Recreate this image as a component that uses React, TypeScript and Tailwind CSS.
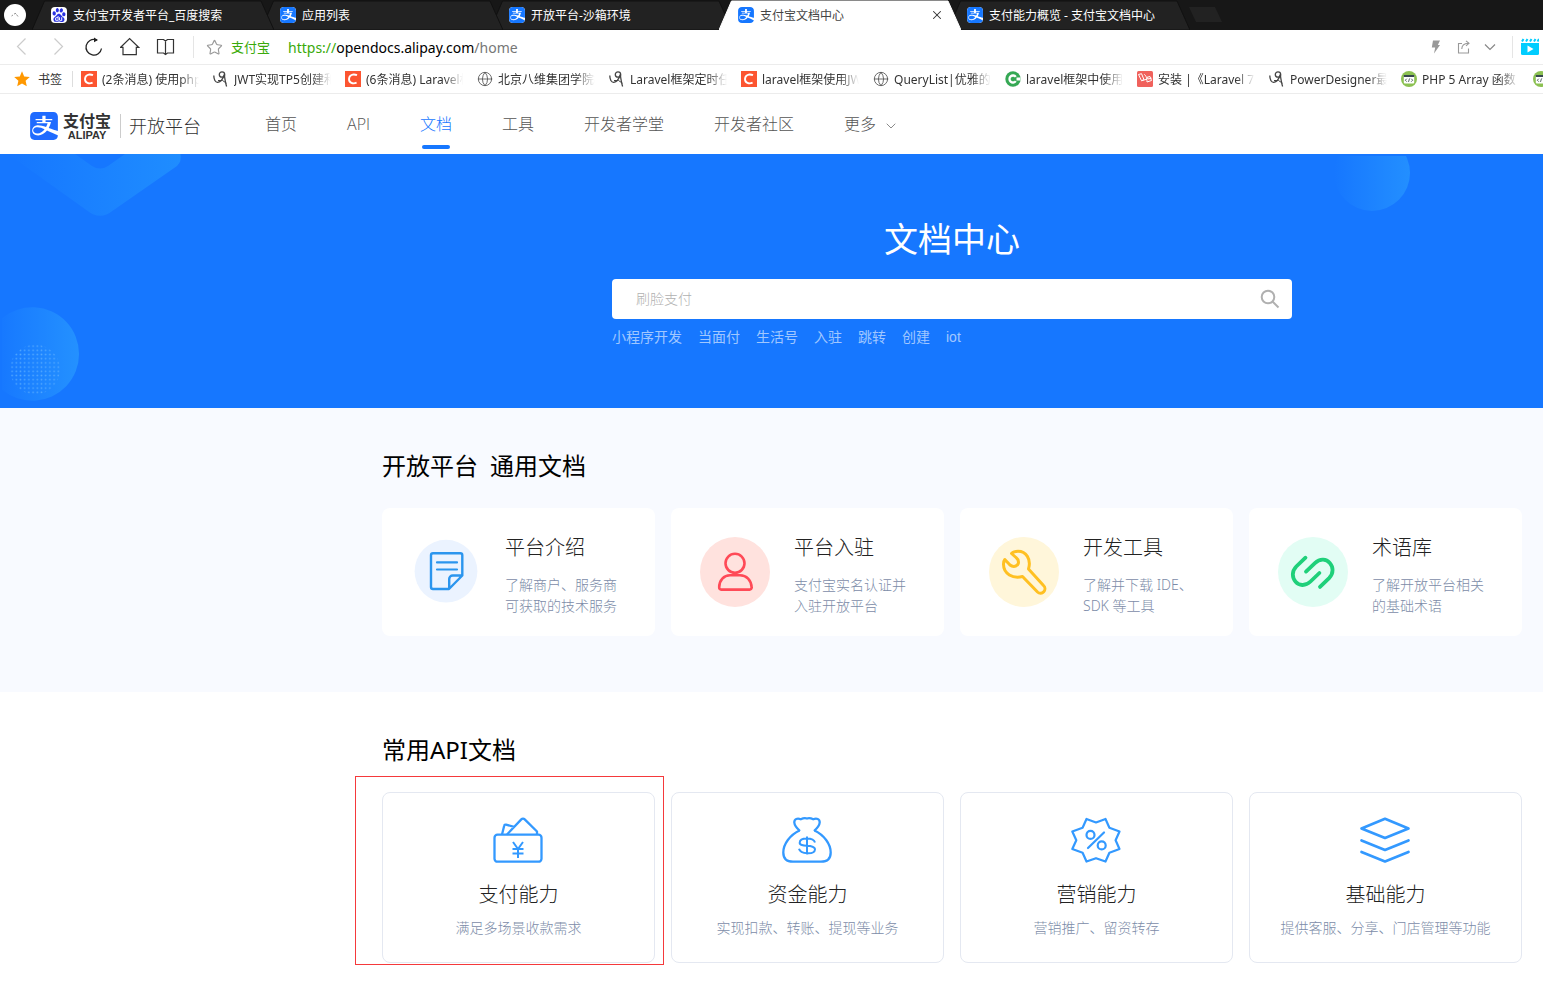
import React from 'react';
import { ChevronDown, Globe, Star, X } from 'lucide-react';
import { SiAlipay, SiBaidu } from 'react-icons/si';

type BookmarkKind = 'csdn' | 'figure' | 'globe' | 'green' | 'laravel' | 'code';

interface Tab {
  title: string;
  icon: 'baidu' | 'alipay';
  active?: boolean;
  layer: string;
}

const tabs: Tab[] = [
  { title: '支付宝开发者平台_百度搜索', icon: 'baidu', layer: 'z-40' },
  { title: '应用列表', icon: 'alipay', layer: 'z-30' },
  { title: '开放平台-沙箱环境', icon: 'alipay', layer: 'z-20' },
  { title: '支付宝文档中心', icon: 'alipay', active: true, layer: 'z-50' },
  { title: '支付能力概览 - 支付宝文档中心', icon: 'alipay', layer: 'z-10' },
];

const bookmarks: { kind: BookmarkKind; title: string }[] = [
  { kind: 'csdn', title: '(2条消息) 使用php' },
  { kind: 'figure', title: 'JWT实现TP5创建和' },
  { kind: 'csdn', title: '(6条消息) Laravel框' },
  { kind: 'globe', title: '北京八维集团学院教' },
  { kind: 'figure', title: 'Laravel框架定时任' },
  { kind: 'csdn', title: 'laravel框架使用JW' },
  { kind: 'globe', title: 'QueryList|优雅的渐' },
  { kind: 'green', title: 'laravel框架中使用' },
  { kind: 'laravel', title: '安装 |《Laravel 7' },
  { kind: 'figure', title: 'PowerDesigner最' },
  { kind: 'code', title: 'PHP 5 Array 函数' },
  { kind: 'code', title: 'PHP' },
];

const navItems = ['首页', 'API', '文档', '工具', '开发者学堂', '开发者社区'];

const hotWords = ['小程序开发', '当面付', '生活号', '入驻', '跳转', '创建', 'iot'];

const AlipayIcon: React.FC = () => (
  <span className="block w-4 h-4 rounded-sm bg-white overflow-hidden shrink-0">
    <SiAlipay size={16} className="text-[#1677ff]" />
  </span>
);

const BookmarkIcon: React.FC<{ kind: BookmarkKind }> = ({ kind }) => {
  switch (kind) {
    case 'csdn':
      return (
        <svg width="16" height="16" viewBox="0 0 16 16" className="shrink-0">
          <rect width="16" height="16" fill="#fc5531" />
          <path d="M12 4.200C8 2.600 4.200 4 4 8c-.1 4 4 5.200 7.600 3.700" fill="none" stroke="#fff" strokeWidth="1.900" />
        </svg>
      );
    case 'figure':
      return (
        <svg width="16" height="16" viewBox="0 0 16 16" className="shrink-0" fill="none" stroke="#444" strokeWidth="1.300">
          <circle cx="9" cy="3.500" r="2.700" />
          <path d="M.8 4.500c0 4 1.500 7 4 6.800 3-.3 5-2.800 6.500-7.800 .5 4 1 8 2.300 12" />
          <path d="M5 9.500l4.500 0 4 2.700" strokeWidth="1" />
        </svg>
      );
    case 'globe':
      return <Globe size={16} strokeWidth={1.3} className="shrink-0 text-[#555]" />;
    case 'green':
      return (
        <svg width="16" height="16" viewBox="0 0 16 16" className="shrink-0">
          <circle cx="8" cy="8" r="7.700" fill="#35a854" />
          <path d="M10.800 5.900a3.500 3.500 0 1 0 0 4.200" fill="none" stroke="#fff" strokeWidth="2.300" />
          <path d="M11.500 6.500h4v3h-4z" fill="#fff" />
        </svg>
      );
    case 'laravel':
      return (
        <svg width="16" height="16" viewBox="0 0 16 16" className="shrink-0">
          <rect width="16" height="16" rx="1.500" fill="#f0615c" />
          <path
            d="M1.500 3.500l3-.8 2.500 6-2.500 1zM4.500 9.700l5.500-1.500M7 3.500c1.500 0 3 3 3 7.500l4.500-1.500-1.500-4-3 .8 1 1.700 3.500-.8"
            fill="none"
            stroke="#fff"
          />
        </svg>
      );
    case 'code':
      return (
        <svg width="16" height="16" viewBox="0 0 16 16" className="shrink-0">
          <circle cx="8" cy="8" r="8" fill="#8cc152" />
          <rect x="2.800" y="4" width="10.400" height="8.500" rx="1" fill="#fff" />
          <rect x="2.800" y="4" width="10.400" height="2" fill="#37474f" />
          <path d="M5.800 7.700L4.300 9.200l1.500 1.500M10.200 7.700l1.500 1.500-1.500 1.500M8.500 7.500l-1 3.400" fill="none" stroke="#455" strokeWidth=".9" />
        </svg>
      );
  }
};

const TabStrip: React.FC = () => (
  <div className="flex h-[30px] bg-[#171717] overflow-hidden">
    <div className="flex items-center w-8 shrink-0 pl-1">
      <span className="flex items-center justify-center w-[22px] h-[22px] rounded-full bg-white">
        <svg width="8" height="6" viewBox="0 0 8 6" fill="none" stroke="#777" strokeWidth=".8">
          <path d="M.5 4l1.500-1M3 2l2-.7M5.500 2.500l1.500 2" />
        </svg>
      </span>
    </div>
    {tabs.map((tab) => (
      <div key={tab.title} className={`relative flex items-center h-[30px] w-[242px] min-w-0 -mr-[13px] pl-[19px] pr-[17px] ${tab.layer}`}>
        <svg className="absolute inset-0 w-full h-full" viewBox="0 0 242 30" preserveAspectRatio="none">
          <path d="M0 30L12.500 1H229L242 30z" fill={tab.active ? '#fff' : '#222'} stroke={tab.active ? '#fff' : '#111'} />
        </svg>
        <button className={`relative flex flex-1 min-w-0 items-center gap-[6px] text-xs ${tab.active ? 'text-[#444]' : 'text-white'}`}>
          {tab.icon === 'baidu' ? (
            <span className="flex items-center justify-center w-4 h-4 rounded-sm bg-white shrink-0">
              <SiBaidu size={14} className="text-[#2932e1]" />
            </span>
          ) : (
            <AlipayIcon />
          )}
          <span className="truncate pt-px">{tab.title}</span>
        </button>
        {tab.active && (
          <button aria-label="关闭" className="relative text-[#333]">
            <X size={14} strokeWidth={1.8} />
          </button>
        )}
      </div>
    ))}
    <svg width="34" height="16" viewBox="0 0 34 16" className="ml-3 mt-[7px] shrink-0">
      <path d="M0 0h26l7 15H7z" fill="#222" />
    </svg>
  </div>
);

const AddressBar: React.FC = () => (
  <div className="flex items-center h-[35px] border-b border-[#ececec] pl-3 text-[#333]">
    <button aria-label="后退" className="w-9">
      <svg width="20" height="20" viewBox="0 0 20 20" fill="none" stroke="#ccc" strokeWidth="1.200">
        <path d="M13.500 1.500L5.500 9.500l8 8" />
      </svg>
    </button>
    <button aria-label="前进" className="w-9">
      <svg width="20" height="20" viewBox="0 0 20 20" fill="none" stroke="#ccc" strokeWidth="1.200">
        <path d="M6.500 1.500l8 8-8 8" />
      </svg>
    </button>
    <button aria-label="刷新" className="w-9">
      <svg width="20" height="20" viewBox="0 0 20 20" fill="none" stroke="#222" strokeWidth="1.300">
        <path d="M12 2.800A7.800 7.800 0 1 0 17.500 11.500M10 2.800h3" />
        <path d="M10 .6L14 2.900 10 5.200z" fill="#222" stroke="none" />
      </svg>
    </button>
    <button aria-label="主页" className="w-9">
      <svg width="20" height="20" viewBox="0 0 20 20" fill="none" stroke="#333" strokeWidth="1.200">
        <path d="M.7 10.300L9.600 1.500l9 8.800h-2.300v7.300H3v-7.300z" />
      </svg>
    </button>
    <button aria-label="阅读" className="w-9">
      <svg width="20" height="20" viewBox="0 0 20 20" fill="none" stroke="#333" strokeWidth="1.200">
        <path d="M1.500 2.500h6l2 1.500 2-1.500h6v13.500h-6l-2 1.500-2-1.500h-6zM9.500 4v13" />
      </svg>
    </button>
    <span className="w-px h-[22px] ml-[1px] bg-[#e5e5e5]" />
    <button aria-label="收藏" className="ml-3 text-[#999]">
      <Star size={17} strokeWidth={1.6} />
    </button>
    <span className="ml-2 pt-px text-[13px] text-[#3aaa0a]">支付宝</span>
    <span className="ml-[18px] pt-px flex-1 text-sm text-black">
      <span className="text-[#3aaa0a]">https://</span>opendocs.alipay.com<span className="text-[#777]">/home</span>
    </span>
    <button aria-label="极速模式">
      <svg width="10" height="14" viewBox="0 0 10 14">
        <path d="M2 .5h7L6.800 5H9L3 13.500 4.200 7.500H.8z" fill="#999" />
      </svg>
    </button>
    <button aria-label="分享" className="ml-4">
      <svg width="14" height="14" viewBox="0 0 14 14" fill="none" stroke="#999" strokeWidth="1.100">
        <path d="M5 3.500H1.500v9.500h10V8.500M4.800 9c0-3.500 2-5.500 6.500-5.700M9 .8l3 2.500-3 2.500" />
      </svg>
    </button>
    <button aria-label="更多选项" className="ml-3">
      <svg width="14" height="14" viewBox="0 0 14 14" fill="none" stroke="#888" strokeWidth="1.200">
        <path d="M2 4.500l5 5 5-5" />
      </svg>
    </button>
    <span className="w-px h-[22px] ml-[15px] bg-[#e5e5e5]" />
    <button aria-label="视频" className="ml-2 mr-1">
      <svg width="18" height="18" viewBox="0 0 18 18">
        <path d="M0 5h18v10.500a1.500 1.500 0 0 1-1.500 1.500h-15A1.500 1.500 0 0 1 0 15.500z" fill="#00cdff" />
        <path d="M1 3.500L2.500 1M5 3.500L6.500 1M9 3.500L10.500 1M13 3.500L14.500 1M16.500 3.500L18 1" stroke="#00cdff" strokeWidth="2" />
        <path d="M6.500 7.500l6 3.500-6 3.500z" fill="#fff" />
      </svg>
    </button>
  </div>
);

const BookmarksBar: React.FC = () => (
  <div className="flex items-center h-[29px] border-b border-[#ececec] pl-[14px] overflow-hidden text-xs text-[#333]">
    <svg width="16" height="16" viewBox="0 0 16 16" className="shrink-0">
      <path d="M8 .3l2.200 5.200 5.600.5-4.200 3.700 1.200 5.600L8 12.400l-4.800 2.900 1.200-5.600L.2 6l5.600-.5z" fill="#ff9800" />
    </svg>
    <span className="ml-2 pt-px shrink-0">书签</span>
    <span className="w-px h-4 ml-[10px] mr-2 bg-[#ddd] shrink-0" />
    {bookmarks.map((item, idx) => (
      <a key={idx} href="#" className="flex items-center gap-[5px] w-[132px] shrink-0">
        <BookmarkIcon kind={item.kind} />
        <span className="w-[97px] pt-px overflow-hidden whitespace-nowrap [mask-image:linear-gradient(to_right,black_80%,transparent)]">
          {item.title}
        </span>
      </a>
    ))}
  </div>
);

const SiteHeader: React.FC = () => (
  <header className="flex items-center h-[60px] bg-white pl-[30px]">
    <a href="#" className="flex items-center mt-1">
      <SiAlipay size={28} className="text-[#1f6bff]" />
      <span className="flex flex-col items-center ml-[5px] text-[#333] font-bold">
        <span className="text-base leading-[18px]">支付宝</span>
        <span className="font-['Liberation_Sans',sans-serif] text-[11px] leading-[10px]">ALIPAY</span>
      </span>
      <span className="w-px h-6 ml-[9px] mr-2 bg-[#ccc]" />
      <span className="text-lg leading-6 text-[#333] font-light">开放平台</span>
    </a>
    <nav className="flex ml-16 gap-[50px] text-base text-[#555] font-light font-['Open_Sans','Noto_Sans_CJK_SC',sans-serif]">
      {navItems.map((item) => (
        <a key={item} href="#" className={`relative whitespace-nowrap ${item === '文档' ? 'text-[#1677ff]' : ''}`}>
          {item}
          {item === '文档' && <span className="absolute left-[2px] right-[2px] -bottom-[13px] h-1 rounded-sm bg-[#1677ff]" />}
        </a>
      ))}
      <button className="flex items-center gap-[7px] whitespace-nowrap">
        更多
        <ChevronDown size={16} strokeWidth={1.300} className="mt-1 text-[#777]" />
      </button>
    </nav>
  </header>
);

const HeroDecor: React.FC = () => (
  <>
    <svg className="absolute left-0 top-0" width="200" height="254" viewBox="0 0 200 254">
      <defs>
        <linearGradient id="band" x1="10" x2="182" y1="0" y2="0" gradientUnits="userSpaceOnUse">
          <stop offset="0" stopColor="#1677ff" />
          <stop offset="1" stopColor="#1f8dff" />
        </linearGradient>
        <linearGradient id="disc">
          <stop offset="0" stopColor="#1779ff" />
          <stop offset="1" stopColor="#2491ff" />
        </linearGradient>
        <pattern id="dots" width="4.200" height="4.200" patternUnits="userSpaceOnUse" x="10" y="190">
          <circle cx="2.100" cy="2.100" r=".85" fill="#52a8ff" />
        </pattern>
      </defs>
      <path d="M8 0L87 56.500q13 10.500 26 0L177 12q5-5 3.500-12H125L108 12q-8 5-16 0L75 0z" fill="url(#band)" />
      <path d="M2 164.500a46.700 46.700 0 1 1 0 71z" fill="url(#disc)" />
      <circle cx="35" cy="215.500" r="25" fill="url(#dots)" />
    </svg>
    <svg className="absolute right-[133px] top-[2px]" width="76" height="56" viewBox="0 0 76 56">
      <defs>
        <linearGradient id="disc2">
          <stop offset="0" stopColor="#1677ff" />
          <stop offset="1" stopColor="#238fff" />
        </linearGradient>
      </defs>
      <circle cx="38" cy="17" r="38" fill="url(#disc2)" />
    </svg>
  </>
);

const Hero: React.FC = () => (
  <section className="relative h-[254px] bg-[#1677ff] overflow-hidden">
    <HeroDecor />
    <div className="relative pl-[382px] pr-[21px] pt-[60px]">
      <div className="w-full max-w-[680px] mx-auto">
        <h1 className="text-[34px] leading-[50px] text-white text-center">文档中心</h1>
        <div className="flex items-center h-10 mt-[15px] pl-6 pr-3 bg-white rounded-sm">
          <input
            aria-label="搜索文档"
            placeholder="刷脸支付"
            className="flex-1 min-w-0 text-sm font-light placeholder:text-[#b0b0b0] focus:outline-none"
          />
          <button aria-label="搜索">
            <svg width="20" height="20" viewBox="0 0 20 20" fill="none" stroke="#b0b0b0" strokeWidth="2">
              <circle cx="8" cy="8" r="6.300" />
              <path d="M12.500 12.500l6 6" />
            </svg>
          </button>
        </div>
        <div className="flex gap-4 mt-2 text-sm text-white/60 font-['Liberation_Sans','Noto_Sans_CJK_SC',sans-serif]">
          {hotWords.map((word) => (
            <a key={word} href="#">{word}</a>
          ))}
        </div>
      </div>
    </div>
  </section>
);

const DocIcon = () => (
  <svg width="70" height="70" viewBox="0 0 70 70" fill="none" className="shrink-0">
    <circle cx="35" cy="34.200" r="31.400" fill="#ebf3ff" />
    <path
      d="M22 16.200h27.300a2 2 0 0 1 2 2V38.500L38 52H22a2 2 0 0 1-2-2V18.200a2 2 0 0 1 2-2zM38.200 51.500V42a3.500 3.500 0 0 1 3.500-3.500h9.300"
      stroke="#2b95ee"
      strokeWidth="2.400"
      strokeLinejoin="round"
    />
    <path d="M26 25.400h20M26 32.500h20" stroke="#2b95ee" strokeWidth="2.200" strokeLinecap="round" />
  </svg>
);

const PersonIcon = () => (
  <svg width="70" height="70" viewBox="0 0 70 70" fill="none" stroke="#ff4a57" strokeWidth="2.600" className="shrink-0">
    <circle cx="35" cy="35" r="35" fill="#ffe2de" stroke="none" />
    <circle cx="35" cy="26.300" r="9.500" />
    <path d="M19.200 50.300C19.200 43 24 38.300 30 38.300h10c6.500 0 11.300 4.700 11.600 12a2 2 0 0 1-2 2.300H21.200a2 2 0 0 1-2-2.300z" />
  </svg>
);

const WrenchIcon = () => (
  <svg width="70" height="70" viewBox="0 0 70 70" fill="none" className="shrink-0">
    <circle cx="35" cy="35" r="35" fill="#fff6da" />
    <path
      d="M22.500 16.500C24 15 26.500 14.300 29 14.300C37 14.300 42.500 22 39.500 32L54.500 48.500A4.300 4.300 0 0 1 48.500 55L33.500 39.500C24 42 14.300 37 14.500 27C14.500 25 15 23.500 15.800 22.500L21 28C24 30.500 28.500 29.500 29.300 26.500C30 23.500 29 22 27 20.500Z"
      stroke="#ffc022"
      strokeWidth="3"
      strokeLinejoin="round"
    />
  </svg>
);

const LinkIcon = () => (
  <svg width="70" height="70" viewBox="0 0 70 70" fill="none" className="shrink-0">
    <circle cx="35" cy="35" r="35" fill="#e2fdf4" />
    <path
      d="M27.500 20.700L18.300 29.500C8.500 39.500 21.500 55 32.500 44.500L41.400 36M42 49.900L51.100 41.100C60.900 31.100 47.900 15.600 36.900 26.100L28 34.600"
      stroke="#1fd07a"
      strokeWidth="3.800"
      strokeLinecap="round"
    />
  </svg>
);

const WalletIcon = () => (
  <svg width="54" height="49" viewBox="0 0 54 49" fill="none" stroke="#3399ff" strokeWidth="2.300" strokeLinejoin="round">
    <rect x="2.500" y="18.700" width="47" height="27" rx="3" />
    <path d="M15 18.500L29.300 3.400a2.400 2.400 0 0 1 3.400 0L45 15.500v3M10 18.500l2.200-8.700a1.500 1.500 0 0 1 1.800-1.200l8 2.200" />
    <path d="M21 26l5 7 5-7M26 33v9M20.500 33h11M20.500 37.500h11" strokeWidth="2" />
  </svg>
);

const BagIcon = () => (
  <svg width="54" height="49" viewBox="0 0 54 49" fill="none" stroke="#3399ff" strokeWidth="2.300" strokeLinejoin="round">
    <path d="M18.500 14.500C9 19 2.300 28 2.300 36.500C2.300 43 6 45.700 12 45.700H40C46 45.700 49.700 43 49.700 36.500C49.700 28 43 19 33.500 14.500" />
    <path d="M19 15C15.500 12 13.500 9.500 13.300 6.500C13.200 2.800 16.500 2 19.800 3.300C22.500 1.800 24.500 1.800 26 2.500C27.500 1.800 29.500 1.800 32.200 3.300C35.500 2 38.800 2.800 38.700 6.500C38.500 9.500 36.500 12 33 15" />
    <path d="M34 26.500C32.500 21.500 19 21 18.700 26.700C18.500 32 34 27.500 34 33.500C33.500 39 19.500 38.500 18 32.800M26 20.500v18" strokeWidth="2" />
  </svg>
);

const CouponIcon = () => (
  <svg width="54" height="49" viewBox="0 0 54 49" fill="none" stroke="#3399ff" strokeWidth="2.200">
    <path
      d="M16.500 3L26 6.500L35.500 3L39.400 11.700L49.500 15.500L45.600 24.300L49.500 33L39.400 36.700L35.500 45.500L26 42.200L16.500 45.500L12.600 36.700L2.300 33L6.300 24.300L2.300 15.500L12.600 11.700Z"
      strokeLinejoin="round"
    />
    <circle cx="20.500" cy="18.900" r="4" />
    <circle cx="31.700" cy="29.400" r="4" />
    <path d="M34 16.500L18 32" strokeLinecap="round" />
  </svg>
);

const LayersIcon = () => (
  <svg width="54" height="49" viewBox="0 0 54 49" fill="none" stroke="#3399ff" strokeWidth="2.700" strokeLinejoin="round" strokeLinecap="round">
    <path d="M26 2.800L49.500 12.400L26 22L2.500 12.400ZM2.500 24.400L26 34L49.500 24.400M2.500 36L26 45.500L49.500 36" />
  </svg>
);

const guides = [
  { title: '平台介绍', lines: ['了解商户、服务商', '可获取的技术服务'], icon: <DocIcon /> },
  { title: '平台入驻', lines: ['支付宝实名认证并', '入驻开放平台'], icon: <PersonIcon /> },
  { title: '开发工具', lines: ['了解并下载 IDE、', 'SDK 等工具'], icon: <WrenchIcon /> },
  { title: '术语库', lines: ['了解开放平台相关', '的基础术语'], icon: <LinkIcon /> },
];

const apis = [
  { title: '支付能力', desc: '满足多场景收款需求', icon: <WalletIcon />, marked: true },
  { title: '资金能力', desc: '实现扣款、转账、提现等业务', icon: <BagIcon /> },
  { title: '营销能力', desc: '营销推广、留资转存', icon: <CouponIcon /> },
  { title: '基础能力', desc: '提供客服、分享、门店管理等功能', icon: <LayersIcon /> },
];

const App: React.FC = () => {
  return (
    <div className="min-h-screen bg-white font-['Noto_Sans','Noto_Sans_CJK_SC',sans-serif]">
      <TabStrip />
      <AddressBar />
      <BookmarksBar />
      <SiteHeader />

      <main>
        <Hero />

        {/* General docs */}
        <section className="bg-[#f8faff] pl-[382px] pr-[21px] pt-10 pb-14">
          <h2 className="flex gap-3 text-2xl leading-9 text-black">
            <span>开放平台</span>
            <span>通用文档</span>
          </h2>
          <div className="grid grid-cols-4 gap-4 mt-6">
            {guides.map((guide) => (
              <a key={guide.title} href="#" className="flex items-center h-32 pl-[29px] bg-white rounded-lg">
                {guide.icon}
                <div className="ml-6 pt-[6px] font-light whitespace-nowrap">
                  <h3 className="text-xl leading-7 text-[#222]">{guide.title}</h3>
                  <p className="mt-3 text-sm leading-[21px] text-[#7c8ca8]">
                    {guide.lines[0]}
                    <br />
                    {guide.lines[1]}
                  </p>
                </div>
              </a>
            ))}
          </div>
        </section>

        {/* API docs */}
        <section className="pl-[382px] pr-[21px] pt-10 pb-11">
          <h2 className="text-2xl leading-9 text-black">常用API文档</h2>
          <div className="grid grid-cols-4 gap-4 mt-6">
            {apis.map((api) => (
              <a
                key={api.title}
                href="#"
                className="relative flex flex-col items-center h-[171px] pt-[23px] border border-[#e4e8f1] rounded-lg font-light whitespace-nowrap"
              >
                {api.icon}
                <h3 className="mt-4 text-xl leading-7 text-[#222]">{api.title}</h3>
                <p className="mt-2 text-sm leading-[21px] text-[#7c8ca8]">{api.desc}</p>
                {api.marked && <span className="absolute -left-7 -right-[10px] -top-[17px] -bottom-[3px] border border-[#f5393b]" />}
              </a>
            ))}
          </div>
        </section>
      </main>
    </div>
  );
};

export default App;
